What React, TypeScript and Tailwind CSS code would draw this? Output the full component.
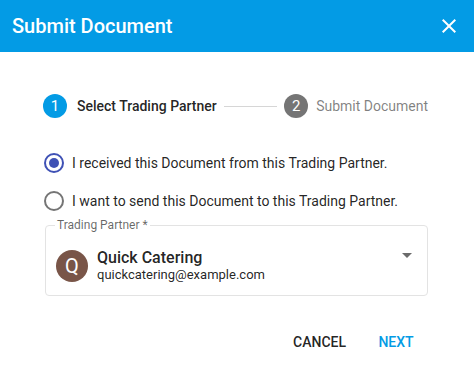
import React from "react";

export default function App() {
  return (
    <div
      className="w-[474px] h-[374px] bg-white overflow-hidden"
      style={{ fontFamily: "Roboto, 'Liberation Sans', sans-serif" }}
    >
      <div className="h-[52px] bg-[#039be5] flex items-center justify-between pl-3 pr-[13px]">
        <div className="text-white text-[20px] font-medium leading-none">Submit Document</div>
        <svg width="24" height="24" viewBox="0 0 24 24" fill="white">
          <path d="M19 6.41 17.59 5 12 10.59 6.41 5 5 6.41 10.59 12 5 17.59 6.41 19 12 13.41 17.59 19 19 17.59 13.41 12z" />
        </svg>
      </div>

      <div className="pl-[43px] pr-[46px]">
        <div className="mt-[42px] h-6 flex items-center">
          <div className="w-6 h-6 rounded-full bg-[#039be5] text-white flex items-center justify-center text-[15px] leading-none">
            1
          </div>
          <div className="ml-[10px] text-[14px] font-medium text-[rgba(0,0,0,0.87)]">Select Trading Partner</div>
          <div className="mx-[7px] flex-1 h-px bg-[#d6d6d6]" />
          <div className="w-6 h-6 rounded-full bg-[#757575] text-white flex items-center justify-center text-[15px] leading-none">
            2
          </div>
          <div className="ml-2 text-[14px] text-[rgba(0,0,0,0.5)]">Submit Document</div>
        </div>

        <div className="mt-[26px] ml-px">
          <div className="h-[38px] flex items-center">
            <div className="w-5 h-5 rounded-full border-2 border-[#3f51b5] flex items-center justify-center">
              <div className="w-[10px] h-[10px] rounded-full bg-[#3f51b5]" />
            </div>
            <div className="ml-2 text-[14px] text-[rgba(0,0,0,0.87)]">
              I received this Document from this Trading Partner.
            </div>
          </div>
          <div className="h-[38px] flex items-center">
            <div className="w-5 h-5 rounded-full border-2 border-[#757575]" />
            <div className="ml-2 text-[14px] text-[rgba(0,0,0,0.87)]">
              I want to send this Document to this Trading Partner.
            </div>
          </div>
        </div>

        <fieldset className="ml-[2px] border border-[#e3e3e3] rounded-[4px] pl-[10px] pr-[15px] pt-[18px] pb-3">
          <legend className="-ml-[1px] px-[2px] text-[12px] leading-[10px] text-[rgba(0,0,0,0.6)]">
            Trading Partner *
          </legend>
          <div className="flex items-center">
            <div className="w-8 h-8 rounded-full bg-[#795548] text-white flex items-center justify-center text-[20px] leading-none">
              Q
            </div>
            <div className="ml-[9px] flex flex-col">
              <div className="text-[16px] leading-[19px] font-medium text-[rgba(0,0,0,0.87)]">Quick Catering</div>
              <div className="text-[13px] leading-[16px] text-[rgba(0,0,0,0.87)]">quickcatering@example.com</div>
            </div>
            <div className="ml-auto self-start mt-[5px]">
              <svg width="10" height="5" viewBox="0 0 10 5" className="block">
                <path d="M0 0 L10 0 L5 5 Z" fill="#6b6b6b" />
              </svg>
            </div>
          </div>
        </fieldset>

        <div className="mt-[28px] flex justify-end gap-[10px]">
          <div className="h-9 px-2 flex items-center text-[14px] font-medium text-[rgba(0,0,0,0.87)]">CANCEL</div>
          <div className="h-9 w-16 flex items-center justify-center text-[14px] font-medium text-[#039be5]">NEXT</div>
        </div>
      </div>
    </div>
  );
}
